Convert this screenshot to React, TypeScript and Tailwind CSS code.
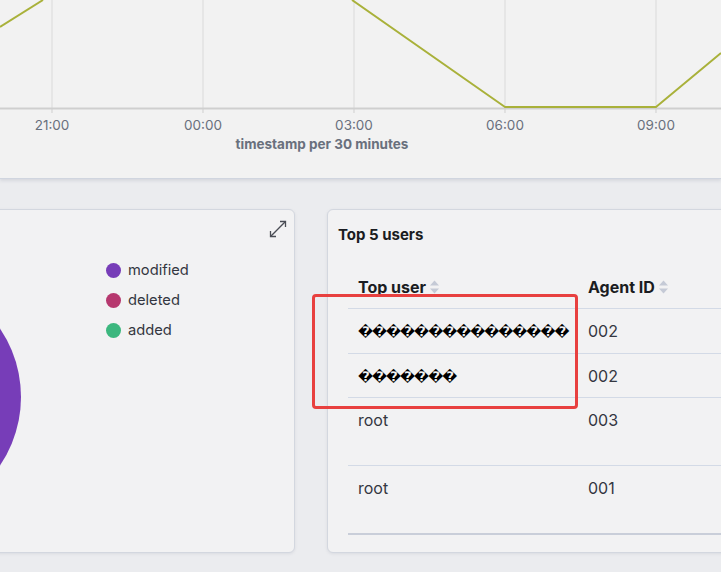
import React from "react";

const FONT = { fontFamily: "Inter, 'Noto Sans', 'DejaVu Sans', sans-serif" };

function SortIcon() {
  return (
    <svg width="11" height="16" viewBox="0 0 11 16" className="ml-[3px] shrink-0">
      <path d="M5.5 1.5 L10 6.5 H1 Z" fill="#c5cad6" />
      <path d="M5.5 14.5 L10 9.5 H1 Z" fill="#c5cad6" />
    </svg>
  );
}

function ExpandIcon() {
  return (
    <svg width="20" height="20" viewBox="0 0 20 20" fill="none" stroke="#4a4d55" strokeWidth="1.3">
      <path d="M12 2.5 H17.5 V8" />
      <path d="M8 17.5 H2.5 V12" />
      <path d="M17.2 2.8 L2.8 17.2" />
    </svg>
  );
}

export default function App() {
  const xs = [52, 203, 354, 505, 656];
  const labels = ["21:00", "00:00", "03:00", "06:00", "09:00"];
  const rows = [
    { user: "\uFFFD".repeat(15), id: "002", h: "h-[45px]", glyph: true },
    { user: "\uFFFD".repeat(7), id: "002", h: "h-[44px]", glyph: true },
    { user: "root", id: "003", h: "h-[68px]", glyph: false },
    { user: "root", id: "001", h: "h-[69px]", glyph: false },
  ];
  return (
    <div className="relative w-[721px] h-[572px] overflow-hidden bg-[#ebecef]" style={FONT}>
      {/* Top chart panel */}
      <div className="h-[179px] bg-[#f2f2f2] border-b border-[#d0d5df] shadow-[0_2px_3px_rgba(120,130,150,0.18)]">
        <svg width="721" height="160" viewBox="0 0 721 160" className="block">
          {xs.map((x) => (
            <line key={x} x1={x} y1={0} x2={x} y2={108} stroke="#dadada" strokeWidth="1" />
          ))}
          <line x1={0} y1={108.5} x2={721} y2={108.5} stroke="#cfcfcf" strokeWidth="2" />
          {xs.map((x) => (
            <line key={"t" + x} x1={x} y1={109} x2={x} y2={113} stroke="#cfcfcf" strokeWidth="1" />
          ))}
          <polyline points="0,27 43,0" fill="none" stroke="#a9b13a" strokeWidth="2" />
          <polyline
            points="352,0 505,107 656,107 721,53"
            fill="none"
            stroke="#a9b13a"
            strokeWidth="2"
            strokeLinejoin="round"
          />
          {xs.map((x, i) => (
            <text key={"l" + x} x={x} y={130} textAnchor="middle" fontSize="13.5" fill="#69707d" style={FONT}>
              {labels[i]}
            </text>
          ))}
          <text x={322} y={149} textAnchor="middle" fontSize="13.5" fontWeight="700" fill="#69707d" style={FONT}>
            timestamp per 30 minutes
          </text>
        </svg>
      </div>

      {/* Bottom row */}
      <div className="flex gap-[32px] mt-[30px] ml-[-20px]">
        {/* Left panel: pie + legend */}
        <div className="relative w-[315px] h-[344px] shrink-0 rounded-[6px] border border-[#d3d7df] bg-[#f2f2f3] shadow-[0_1px_3px_rgba(120,130,150,0.15)] overflow-hidden flex">
          <svg width="125" height="342" viewBox="0 0 125 342" className="block shrink-0 overflow-visible">
            <circle cx={-82} cy={187} r={122} fill="#773db8" />
          </svg>
          <div className="flex flex-col pt-[45px]">
            {[
              ["modified", "#773db8"],
              ["deleted", "#b6386e"],
              ["added", "#3cb77e"],
            ].map(([name, color]) => (
              <div key={name} className="flex items-center h-[30px] gap-[7px] ml-[0px]">
                <span className="w-[15px] h-[15px] rounded-full" style={{ backgroundColor: color }} />
                <span className="text-[14.7px] text-[#343741] leading-none">{name}</span>
              </div>
            ))}
          </div>
          <div className="absolute top-[9px] right-[6px]">
            <ExpandIcon />
          </div>
        </div>

        {/* Right panel: table */}
        <div className="w-[420px] h-[344px] shrink-0 rounded-[6px] border border-[#d3d7df] bg-[#f2f2f3] shadow-[0_1px_3px_rgba(120,130,150,0.15)] pt-[15px] pl-[10px]">
          <div className="text-[15px] font-bold text-[#1a1c21] leading-[20px]">Top 5 users</div>
          <div className="ml-[10px] mt-[19px]">
            <div className="flex h-[45px] items-center pt-[1px] border-b border-[#d3dae6]">
              <div className="w-[230px] pl-[10px] flex items-center text-[16px] font-bold text-[#1a1c21]">
                Top user
                <SortIcon />
              </div>
              <div className="pl-[10px] flex items-center text-[16px] font-bold text-[#1a1c21]">
                Agent ID
                <SortIcon />
              </div>
            </div>
            {rows.map((r, i) => (
              <div
                key={i}
                className={`flex items-start ${r.h} ${i === rows.length - 1 ? "border-b-2 border-[#c9ced9]" : "border-b border-[#d3dae6]"}`}
              >
                <div
                  className={`w-[230px] pl-[10px] pt-[12px] leading-[20px] whitespace-nowrap ${r.glyph ? "text-[13.5px] text-black font-bold tracking-[-1px]" : "text-[16px] text-[#343741]"}`}
                  style={r.glyph ? { fontFamily: "'DejaVu Sans', sans-serif" } : undefined}
                >
                  {r.user}
                </div>
                <div className="pl-[10px] pt-[12px] leading-[20px] text-[16px] text-[#343741]">{r.id}</div>
              </div>
            ))}
          </div>
        </div>
      </div>

      {/* Red annotation box */}
      <div className="absolute left-[312px] top-[294px] w-[266px] h-[115px] border-[3px] border-[#e8403f] rounded-[4px]" />
    </div>
  );
}
